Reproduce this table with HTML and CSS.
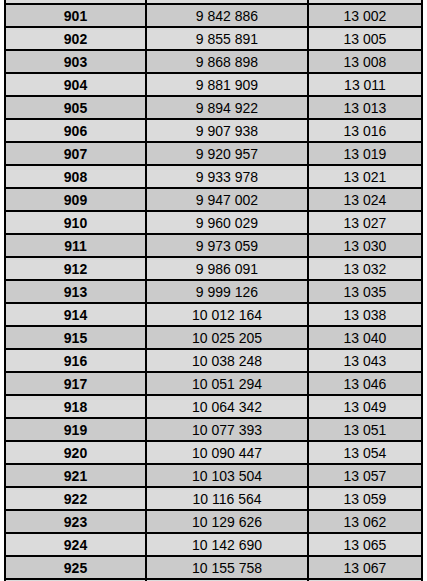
FILE: index.html
```html
<!DOCTYPE html>
<html>
<head>
<meta charset="utf-8">
<link rel="stylesheet" href="styles.css">
</head>
<body>
<div class="sheet">
<table class="data">
<colgroup><col class="c1"><col class="c2"><col class="c3"></colgroup>
<tbody>
<tr class="light"><td class="num"></td><td></td><td></td></tr>
<tr class="dark"><td class="num">901</td><td>9 842 886</td><td>13 002</td></tr>
<tr class="light"><td class="num">902</td><td>9 855 891</td><td>13 005</td></tr>
<tr class="dark"><td class="num">903</td><td>9 868 898</td><td>13 008</td></tr>
<tr class="light"><td class="num">904</td><td>9 881 909</td><td>13 011</td></tr>
<tr class="dark"><td class="num">905</td><td>9 894 922</td><td>13 013</td></tr>
<tr class="light"><td class="num">906</td><td>9 907 938</td><td>13 016</td></tr>
<tr class="dark"><td class="num">907</td><td>9 920 957</td><td>13 019</td></tr>
<tr class="light"><td class="num">908</td><td>9 933 978</td><td>13 021</td></tr>
<tr class="dark"><td class="num">909</td><td>9 947 002</td><td>13 024</td></tr>
<tr class="light"><td class="num">910</td><td>9 960 029</td><td>13 027</td></tr>
<tr class="dark"><td class="num">911</td><td>9 973 059</td><td>13 030</td></tr>
<tr class="light"><td class="num">912</td><td>9 986 091</td><td>13 032</td></tr>
<tr class="dark"><td class="num">913</td><td>9 999 126</td><td>13 035</td></tr>
<tr class="light"><td class="num">914</td><td>10 012 164</td><td>13 038</td></tr>
<tr class="dark"><td class="num">915</td><td>10 025 205</td><td>13 040</td></tr>
<tr class="light"><td class="num">916</td><td>10 038 248</td><td>13 043</td></tr>
<tr class="dark"><td class="num">917</td><td>10 051 294</td><td>13 046</td></tr>
<tr class="light"><td class="num">918</td><td>10 064 342</td><td>13 049</td></tr>
<tr class="dark"><td class="num">919</td><td>10 077 393</td><td>13 051</td></tr>
<tr class="light"><td class="num">920</td><td>10 090 447</td><td>13 054</td></tr>
<tr class="dark"><td class="num">921</td><td>10 103 504</td><td>13 057</td></tr>
<tr class="light"><td class="num">922</td><td>10 116 564</td><td>13 059</td></tr>
<tr class="dark"><td class="num">923</td><td>10 129 626</td><td>13 062</td></tr>
<tr class="light"><td class="num">924</td><td>10 142 690</td><td>13 065</td></tr>
<tr class="dark"><td class="num">925</td><td>10 155 758</td><td>13 067</td></tr>
<tr class="light"><td class="num"></td><td></td><td></td></tr>
</tbody>
</table>
</div>
</body>
</html>
```

FILE: styles.css
```css
html, body {
  margin: 0;
  padding: 0;
  background: #ffffff;
}

.sheet {
  height: 581px;
  overflow: hidden;
  padding-left: 4px;
}

.data {
  border-collapse: collapse;
  table-layout: fixed;
  width: 417px;
  margin-top: -20px;
  font-family: "Liberation Sans", Arial, sans-serif;
  font-size: 14px;
  color: #000000;
}

.c1 { width: 141px; }
.c2 { width: 162px; }
.c3 { width: 114px; }

.data td {
  border: 2px solid #000000;
  height: 21px;
  padding: 0;
  text-align: center;
  vertical-align: middle;
  line-height: 16px;
}

.data td.num {
  font-weight: bold;
}

.dark td {
  background: #cbcbcb;
}

.light td {
  background: #dbdbdb;
}
```
